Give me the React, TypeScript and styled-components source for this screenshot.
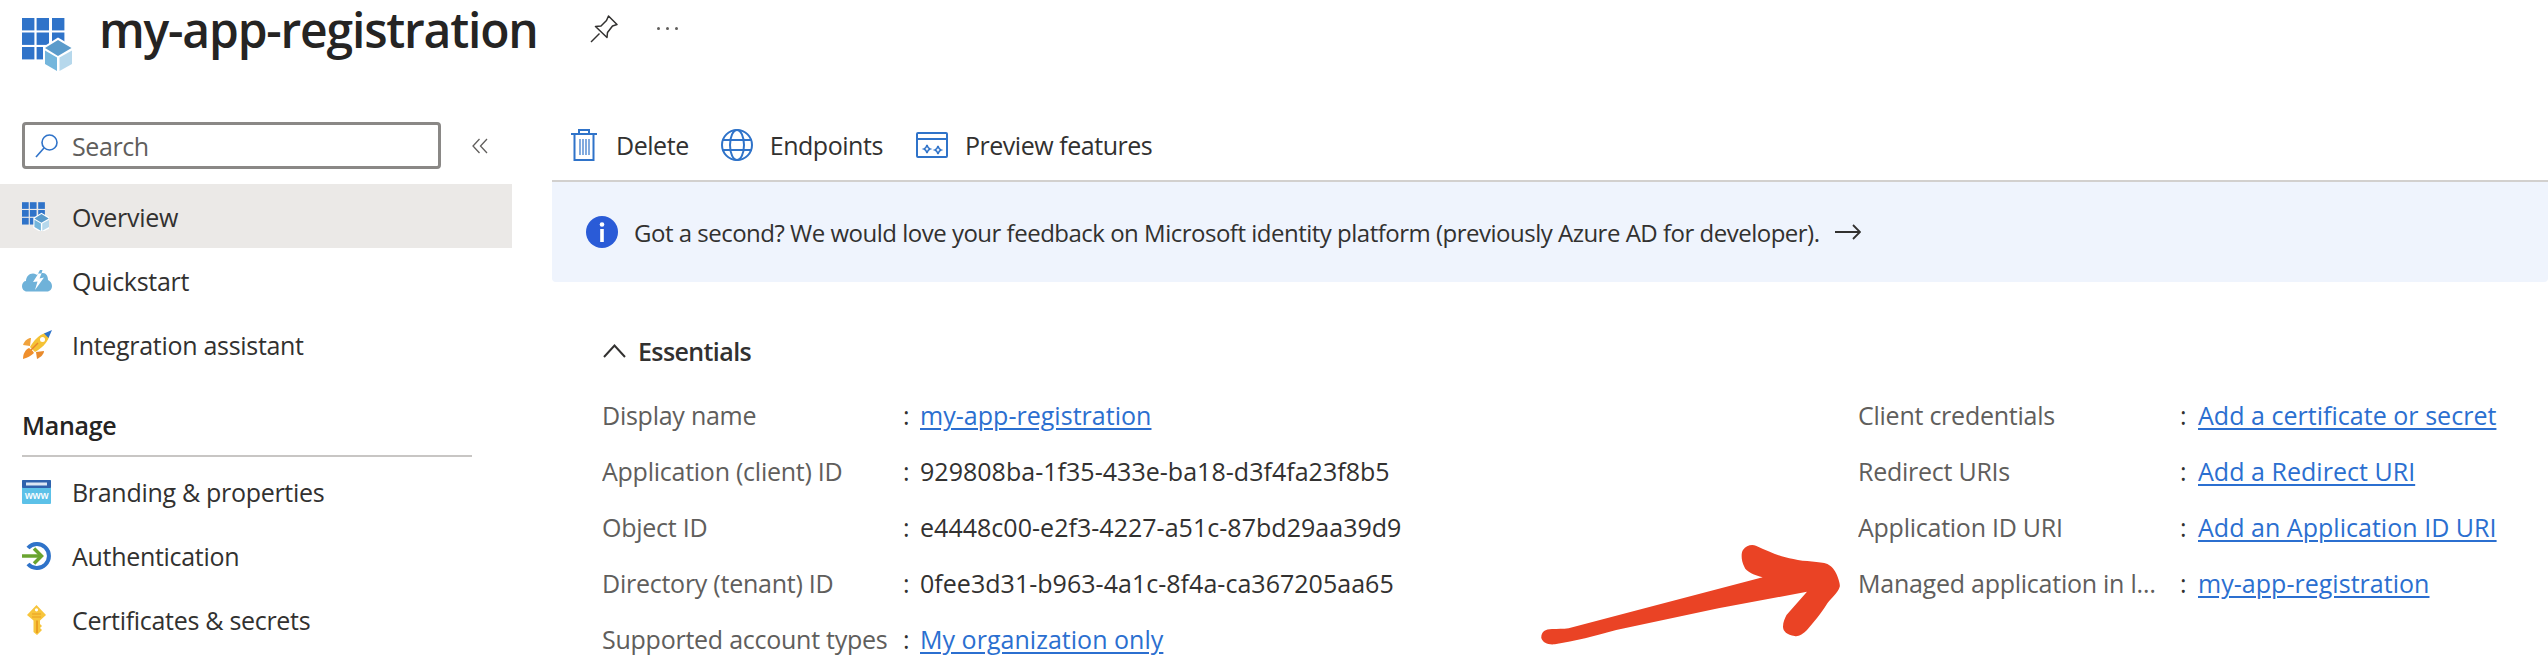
import React from "react";
import styled, { createGlobalStyle } from "styled-components";

const Global = createGlobalStyle`
  html, body { margin: 0; padding: 0; background: #fff; }
  body { width: 2548px; height: 664px; overflow: hidden; font-family: "Open Sans", "Noto Sans", sans-serif; color: #323130; }
  * { box-sizing: border-box; }
`;

const Page = styled.div`
  position: relative;
  width: 2548px;
  height: 664px;
  overflow: hidden;
`;
const Header = styled.header`
  height: 110px;
  display: flex;
  align-items: flex-start;
  padding: 0 0 0 22px;
`;
const HeaderIcon = styled.span`
  display: flex;
  margin-top: 18px;
`;
const Title = styled.h1`
  margin: 0 0 0 27px;
  font-size: 48px;
  line-height: 60px;
  font-weight: 600;
  letter-spacing: -1.2px;
  color: #252423;
  white-space: nowrap;
`;
const PinButton = styled.span`
  display: flex;
  margin: 15px 0 0 52px;
`;
const MoreDots = styled.span`
  display: flex;
  gap: 6px;
  margin: 27px 0 0 39px;
  i { width: 3px; height: 3px; border-radius: 50%; background: #605e5c; display: block; }
`;
const Main = styled.div`
  display: flex;
  align-items: flex-start;
`;
const Sidebar = styled.aside`
  width: 512px;
  flex: none;
`;
const SearchRow = styled.div`
  display: flex;
  align-items: center;
  padding: 12px 0 15px 22px;
  gap: 31px;
`;
const SearchBox = styled.div`
  width: 419px;
  height: 47px;
  border: 3px solid #8a8886;
  border-radius: 4px;
  display: flex;
  align-items: center;
  padding-left: 10px;
  gap: 14px;
  font-size: 25px;
  letter-spacing: -0.4px;
  color: #605e5c;
`;
const NavList = styled.nav`
  display: flex;
  flex-direction: column;
`;
const NavItem = styled.div<{ $active?: boolean }>`
  height: 64px;
  display: flex;
  align-items: center;
  padding: 1px 0 0 22px;
  gap: 20px;
  font-size: 25px;
  letter-spacing: -0.3px;
  color: #323130;
  background: ${(p) => (p.$active ? "#ebe9e7" : "transparent")};
`;
const NavIcon = styled.span`
  width: 30px;
  height: 34px;
  display: flex;
  align-items: center;
  justify-content: flex-start;
  flex: none;
`;
const NavGroup = styled.div`
  margin: 30px 0 2px 22px;
  width: 450px;
  height: 51px;
  border-bottom: 2px solid #c8c6c4;
  font-size: 25px;
  font-weight: 600;
  letter-spacing: -0.3px;
  line-height: 38px;
  color: #252423;
`;
const Content = styled.section`
  flex: 1;
  margin-left: 40px;
`;
const Toolbar = styled.div`
  height: 72px;
  display: flex;
  align-items: center;
  padding: 0 0 0 19px;
  border-bottom: 2px solid #d2d0ce;
`;
const ToolButton = styled.div<{ $gap: number; $end: number }>`
  display: flex;
  align-items: center;
  gap: ${(p) => p.$gap}px;
  margin-right: ${(p) => p.$end}px;
  font-size: 25px;
  letter-spacing: -0.46px;
  color: #323130;
`;
const Banner = styled.div`
  height: 100px;
  background: #eff4fd;
  border-radius: 0 0 4px 4px;
  display: flex;
  align-items: center;
  padding: 0 0 0 34px;
  gap: 16px;
  font-size: 24px;
  letter-spacing: -0.5px;
  color: #323130;
`;
const InfoCircle = styled.span`
  width: 32px;
  height: 32px;
  border-radius: 50%;
  background: #2a5bd7;
  display: flex;
  flex: none;
`;
const Essentials = styled.div`
  padding-left: 50px;
`;
const EssentialsHead = styled.div`
  height: 40px;
  margin-top: 49px;
  display: flex;
  align-items: center;
  gap: 12px;
  padding-left: 1px;
  font-size: 25px;
  font-weight: 600;
  letter-spacing: -0.6px;
  color: #323130;
`;
const Columns = styled.div`
  margin-top: 16px;
  display: grid;
  grid-template-columns: 1256px 1fr;
`;
const Column = styled.div`
  display: flex;
  flex-direction: column;
`;
const Row = styled.div`
  height: 56px;
  display: flex;
  align-items: center;
  font-size: 25px;
  letter-spacing: 0.03px;
`;
const Label = styled.span<{ $w: number; $pad?: number }>`
  width: ${(p) => p.$w}px;
  margin-right: ${(p) => p.$pad ?? 0}px;
  flex: none;
  color: #605e5c;
  letter-spacing: -0.25px;
  white-space: nowrap;
  overflow: hidden;
  text-overflow: ellipsis;
`;
const Colon = styled.span<{ $w: number }>`
  width: ${(p) => p.$w}px;
  flex: none;
  color: #323130;
`;
const Value = styled.span`
  color: #323130;
  white-space: nowrap;
`;
const Link = styled.a`
  color: #2b6fd0;
  text-decoration: underline;
  text-decoration-thickness: 2px;
  text-underline-offset: 3px;
  white-space: nowrap;
`;
const ArrowMark = styled.svg`
  position: absolute;
  left: 1530px;
  top: 540px;
  width: 320px;
  height: 110px;
`;

const Blue = "#2f73c9";

const RegIcon = ({ w, h }: { w: number; h: number }) => (
  <svg width={w} height={h} viewBox="0 0 50 53" style={{ flex: "none" }}>
    {[0, 14.6, 30].map((x) =>
      [0, 14.5, 29].map((y) => <rect key={`${x}-${y}`} x={x} y={y} width={12.4} height={12.4} fill={Blue} />)
    )}
    <path d="M36 19.5 52 29 52 48 36 56 21 48 21 29Z" fill="#fff" />
    <path d="M36 22 49.5 30 36 38 23 30Z" fill="#5a9bcb" />
    <path d="M23 32.5 35 39.5V53L23 46Z" fill="#74b6dc" />
    <path d="M37.5 39.5 50 32.5V46L37.5 53Z" fill="#b6d8ec" />
  </svg>
);

const Cloud = () => (
  <svg width="30" height="22" viewBox="0 0 30 22">
    <path d="M5 21.500C2 21.500 0 19 0 16 0 13 2 11 4 11 4 7 7 3.500 11 3.500 13 3.500 15 5 15 5 17 3 19 3 21 3 24 3 26 6 26 10 28 11 30 13 30 16 30 19 28 21.500 25 21.500Z" fill="#6fb2d9" />
    <path d="M18 1 11 12 15.500 11.500 13 20 22 7.500 17.500 8.500 20.500 1Z" fill="#fff" />
    <path d="M18 0 16 3.500H19.500L20.500 0Z" fill="#6fb2d9" />
  </svg>
);
const Rocket = () => (
  <svg width="30" height="30" viewBox="0 0 30 30">
    <path d="M1 29C1 24 3 20 7 18 9 19 11 21 12 23 9 26 5 28 1 29Z" fill="#ef8f2c" />
    <path d="M9 8C6 8 3 10 1 15L8 16Z" fill="#f0a23c" />
    <path d="M22 21C22 24 19 27 15 29L14 22Z" fill="#e88a2c" />
    <path d="M8 17C12 10 17 5 23 3L27 7C25 13 20 18 13 22Z" fill="#f4c235" />
    <path d="M22 3.500 30 0 26.500 8Z" fill="#2f73c9" />
    <circle cx="20.500" cy="9.500" r="2.500" fill="#fff" />
    <path d="M9 20 16 13" stroke="#e8842a" strokeWidth="1.500" />
  </svg>
);
const Www = () => (
  <svg width="29" height="24" viewBox="0 0 29 24">
    <rect width="29" height="24" rx="1" fill="#5cc1e8" />
    <rect width="29" height="8" rx="1" fill="#2f62ad" />
    <rect x="4" y="2.500" width="21" height="3" fill="#dbe6f4" />
    <text x="14.500" y="18.500" fontSize="10" fill="#fff" textAnchor="middle" fontFamily="Open Sans" fontWeight="600">www</text>
  </svg>
);
const Auth = () => (
  <svg width="30" height="28" viewBox="0 0 30 28">
    <path d="M6 6A12 12 0 1 1 6 22" fill="none" stroke="#2f73c9" strokeWidth="4" />
    <path d="M0 14H19" stroke="#6aa42f" strokeWidth="3.500" />
    <path d="M12 6.500 19.500 14 12 21.500" fill="none" stroke="#6aa42f" strokeWidth="3.500" />
  </svg>
);
const Key = () => (
  <svg width="30" height="30" viewBox="0 0 30 30">
    <path d="M14.500 0 24 10 18 15.500V19L20 21 18 23 20 25 15 30 11.500 27V15.500L5 10Z" fill="#f7c53c" />
    <path d="M15 15.500V28" stroke="#ea9f22" strokeWidth="2" />
    <circle cx="14.500" cy="4.800" r="1.600" fill="#fff" />
    <path d="M10 9H19M10 12H19" stroke="#ea9f22" strokeWidth="1.200" />
  </svg>
);
const Trash = () => (
  <svg width="26" height="32" viewBox="0 0 26 32" fill="none" stroke={Blue} strokeWidth="2">
    <path d="M0 5H26M8 5V1H18V5M3.500 5V31H22.500V5" />
    <path d="M9 10V26M12 10V26M15 10V26M18 10V26" strokeWidth="1.200" />
  </svg>
);
const Globe = () => (
  <svg width="32" height="32" viewBox="0 0 32 32" fill="none" stroke={Blue} strokeWidth="2">
    <circle cx="16" cy="16" r="15" />
    <ellipse cx="16" cy="16" rx="7" ry="15" />
    <path d="M1.500 11H30.500M1.500 21H30.500" />
  </svg>
);
const Preview = () => (
  <svg width="32" height="26" viewBox="0 0 32 26" fill="none" stroke={Blue} strokeWidth="2">
    <rect x="1" y="1" width="30" height="24" rx="1" />
    <path d="M1 7H31" />
    <path d="M11 13C11.500 15 12.500 16.500 14 17 12.500 17.500 11.500 19 11 21 10.500 19 9.500 17.500 8 17 9.500 16.500 10.500 15 11 13ZM22 14C22.500 16 23.500 17.500 25 18 23.500 18.500 22.500 20 22 22 21.500 20 20.500 18.500 19 18 20.500 17.500 21.500 16 22 14Z" strokeWidth="1.500" />
  </svg>
);
const Pin = () => (
  <svg width="28" height="28" viewBox="0 0 28 28" fill="none" stroke="#323130" strokeWidth="1.500">
    <path d="M1 27 9.500 18.500" />
    <path d="M18.500 1 27 9.500 22.500 11 17.500 17.500 17 22.500 5.500 11.500 11 11 16.500 5.500Z" strokeLinejoin="round" />
  </svg>
);
const Loupe = () => (
  <svg width="23" height="24" viewBox="0 0 23 24" fill="none" stroke={Blue} strokeWidth="1.600">
    <ellipse cx="14.500" cy="8.500" rx="7.500" ry="7.500" />
    <path d="M9 14 1 23" />
  </svg>
);
const Collapse = () => (
  <svg width="16" height="16" viewBox="0 0 16 16" fill="none" stroke="#605e5c" strokeWidth="1.300">
    <path d="M7.500 1 1 8 7.500 15M15 1 8.500 8 15 15" />
  </svg>
);
const Chevron = () => (
  <svg width="23" height="14" viewBox="0 0 23 14" fill="none" stroke="#323130" strokeWidth="2">
    <path d="M1 13 11.500 1.500 22 13" />
  </svg>
);
const LongArrow = () => (
  <svg width="26" height="16" viewBox="0 0 26 16" fill="none" stroke="#323130" strokeWidth="1.800">
    <path d="M0 8H25M18 1 25 8 18 15" />
  </svg>
);
const InfoGlyph = () => (
  <svg width="32" height="32" viewBox="0 0 32 32">
    <circle cx="16" cy="8.500" r="2.300" fill="#fff" />
    <rect x="14.200" y="13" width="3.600" height="13" fill="#fff" />
  </svg>
);

const left: [string, string, boolean][] = [
  ["Display name", "my-app-registration", true],
  ["Application (client) ID", "929808ba-1f35-433e-ba18-d3f4fa23f8b5", false],
  ["Object ID", "e4448c00-e2f3-4227-a51c-87bd29aa39d9", false],
  ["Directory (tenant) ID", "0fee3d31-b963-4a1c-8f4a-ca367205aa65", false],
  ["Supported account types", "My organization only", true],
];
const right: [string, string][] = [
  ["Client credentials", "Add a certificate or secret"],
  ["Redirect URIs", "Add a Redirect URI"],
  ["Application ID URI", "Add an Application ID URI"],
  ["Managed application in local directory", "my-app-registration"],
];

export default function App() {
  return (
    <Page>
      <Global />
      <Header>
        <HeaderIcon><RegIcon w={50} h={53} /></HeaderIcon>
        <Title>my-app-registration</Title>
        <PinButton><Pin /></PinButton>
        <MoreDots><i /><i /><i /></MoreDots>
      </Header>
      <Main>
        <Sidebar>
          <SearchRow>
            <SearchBox><Loupe />Search</SearchBox>
            <Collapse />
          </SearchRow>
          <NavList>
            <NavItem $active><NavIcon><RegIcon w={27} h={29} /></NavIcon>Overview</NavItem>
            <NavItem><NavIcon><Cloud /></NavIcon>Quickstart</NavItem>
            <NavItem><NavIcon><Rocket /></NavIcon>Integration assistant</NavItem>
            <NavGroup>Manage</NavGroup>
            <NavItem><NavIcon><Www /></NavIcon>Branding &amp; properties</NavItem>
            <NavItem><NavIcon><Auth /></NavIcon>Authentication</NavItem>
            <NavItem><NavIcon><Key /></NavIcon>Certificates &amp; secrets</NavItem>
          </NavList>
        </Sidebar>
        <Content>
          <Toolbar>
            <ToolButton $gap={19} $end={32}><Trash />Delete</ToolButton>
            <ToolButton $gap={17} $end={33}><Globe />Endpoints</ToolButton>
            <ToolButton $gap={17} $end={0}><Preview />Preview features</ToolButton>
          </Toolbar>
          <Banner>
            <InfoCircle><InfoGlyph /></InfoCircle>
            Got a second? We would love your feedback on Microsoft identity platform (previously Azure AD for developer).
            <LongArrow />
          </Banner>
          <Essentials>
            <EssentialsHead><Chevron />Essentials</EssentialsHead>
            <Columns>
              <Column>
                {left.map(([l, v, isLink]) => (
                  <Row key={l}>
                    <Label $w={301}>{l}</Label>
                    <Colon $w={17}>:</Colon>
                    {isLink ? <Link>{v}</Link> : <Value>{v}</Value>}
                  </Row>
                ))}
              </Column>
              <Column>
                {right.map(([l, v]) => (
                  <Row key={l}>
                    <Label $w={305} $pad={17}>{l}</Label>
                    <Colon $w={18}>:</Colon>
                    <Link>{v}</Link>
                  </Row>
                ))}
              </Column>
            </Columns>
          </Essentials>
        </Content>
      </Main>
      <ArrowMark viewBox="1530 540 320 110">
        <path
          d="M1541.3 638C1541 632 1545 629 1552 629C1558 629 1563 629 1568.600 628.300L1650.300 606.700L1762.700 577.300C1755 575 1746 572 1744.300 566.700C1741 560 1741 553 1743 550C1746 546 1751 544 1755.900 545.700C1770 552 1780 557 1793.400 559C1805 562 1820 561 1827.400 564C1833 567 1836 572 1837.600 576.700C1840 583 1840 586 1839.700 586.700C1838 593 1832 597 1827.400 603.300C1820 615 1814 622 1807 630C1803 634 1798 637 1794.700 636C1787 635 1783 631 1783 626.700C1783 622 1785 618 1786.500 615L1807 591.700L1718.400 608.300L1616.200 630C1595 636 1575 641 1554.900 644.300C1548 645 1543 643 1541.300 638Z"
          fill="#ea4325"
        />
      </ArrowMark>
    </Page>
  );
}
